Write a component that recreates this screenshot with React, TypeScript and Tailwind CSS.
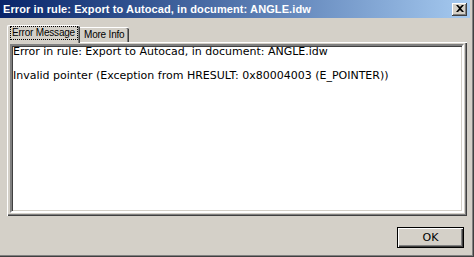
import React from "react";

export default function App() {
  const sans = { fontFamily: '"Liberation Sans", Arial, sans-serif' };
  const body = { fontFamily: '"DejaVu Sans", Verdana, sans-serif' };
  return (
    <div
      className="w-[474px] h-[257px] bg-[#d4d0c8] flex flex-col pr-[4px] pb-[3px] shadow-[inset_-1px_-1px_0_#404040,inset_-2px_-2px_0_#808080] overflow-hidden text-[11px] text-black"
      style={sans}
    >
      {/* Title bar */}
      <div className="h-[18px] flex items-center bg-gradient-to-r from-[#0a246a] to-[#a6caf0] pl-[3px] pr-[3px]">
        <span className="flex-1 text-white font-bold text-[11px] leading-none whitespace-nowrap tracking-[0.1px]">
          Error in rule: Export to Autocad, in document: ANGLE.idw
        </span>
        <div className="w-[15px] h-[13px] bg-[#d4d0c8] shadow-[inset_-1px_-1px_0_#404040,inset_1px_1px_0_#ffffff,inset_-2px_-2px_0_#808080] flex items-center justify-center">
          <svg width="8" height="7" viewBox="0 0 8 7" className="mb-[1px]">
            <path d="M0 0h2l2 2 2-2h2L5 3.5 8 7H6L4 5 2 7H0l3-3.5z" fill="#000" />
          </svg>
        </div>
      </div>

      {/* Body */}
      <div className="flex-1 flex flex-col pl-[7px] pr-[3px]">
        {/* Tabs */}
        <div className="flex items-end h-[24px] relative z-10 text-[10px] tracking-[-0.2px]">
          <div className="w-[73px] h-[18px] bg-[#d4d0c8] border-t border-l border-white shadow-[inset_-1px_0_0_#404040,inset_-2px_0_0_#808080] rounded-t-[2px] flex items-start justify-center pt-[1px] pr-[1px] relative top-[1px]">
            <span className="w-[66px] text-center leading-[12px] outline outline-1 outline-dotted outline-black">
              Error Message
            </span>
          </div>
          <div className="w-[49px] h-[15px] bg-[#d4d0c8] border-t border-white shadow-[inset_-1px_0_0_#404040,inset_-2px_0_0_#808080] rounded-tr-[2px] flex items-start pt-[1px] pl-[4px]">
            <span className="leading-[12px] whitespace-nowrap">More Info</span>
          </div>
        </div>

        {/* Tab panel */}
        <div className="h-[174px] border-t border-l border-white shadow-[inset_-1px_-1px_0_#404040,inset_-2px_-2px_0_#808080] pl-[2px] pt-[1px] pr-[3px] pb-[3px] flex">
          <div className="flex-1 bg-white border-2 border-t-[#808080] border-l-[#808080] border-b-[#ffffff] border-r-[#ffffff] shadow-[inset_1px_1px_0_#404040,inset_-1px_-1px_0_#d4d0c8] pl-[1px]" style={body}>
            <div className="leading-[12px] whitespace-nowrap">
              Error in rule: Export to Autocad, in document: ANGLE.idw
            </div>
            <div className="leading-[12px]">&nbsp;</div>
            <div className="leading-[12px] whitespace-nowrap">
              Invalid pointer (Exception from HRESULT: 0x80004003 (E_POINTER))
            </div>
          </div>
        </div>

        {/* Footer */}
        <div className="flex-1 flex justify-end items-start pt-[11px] pr-[3px]">
          <button className="w-[67px] h-[21px] bg-[#d4d0c8] border border-black shadow-[inset_1px_1px_0_#ffffff,inset_-1px_-1px_0_#404040,inset_-2px_-2px_0_#808080] text-[11px] leading-none" style={body}>
            OK
          </button>
        </div>
      </div>
    </div>
  );
}
